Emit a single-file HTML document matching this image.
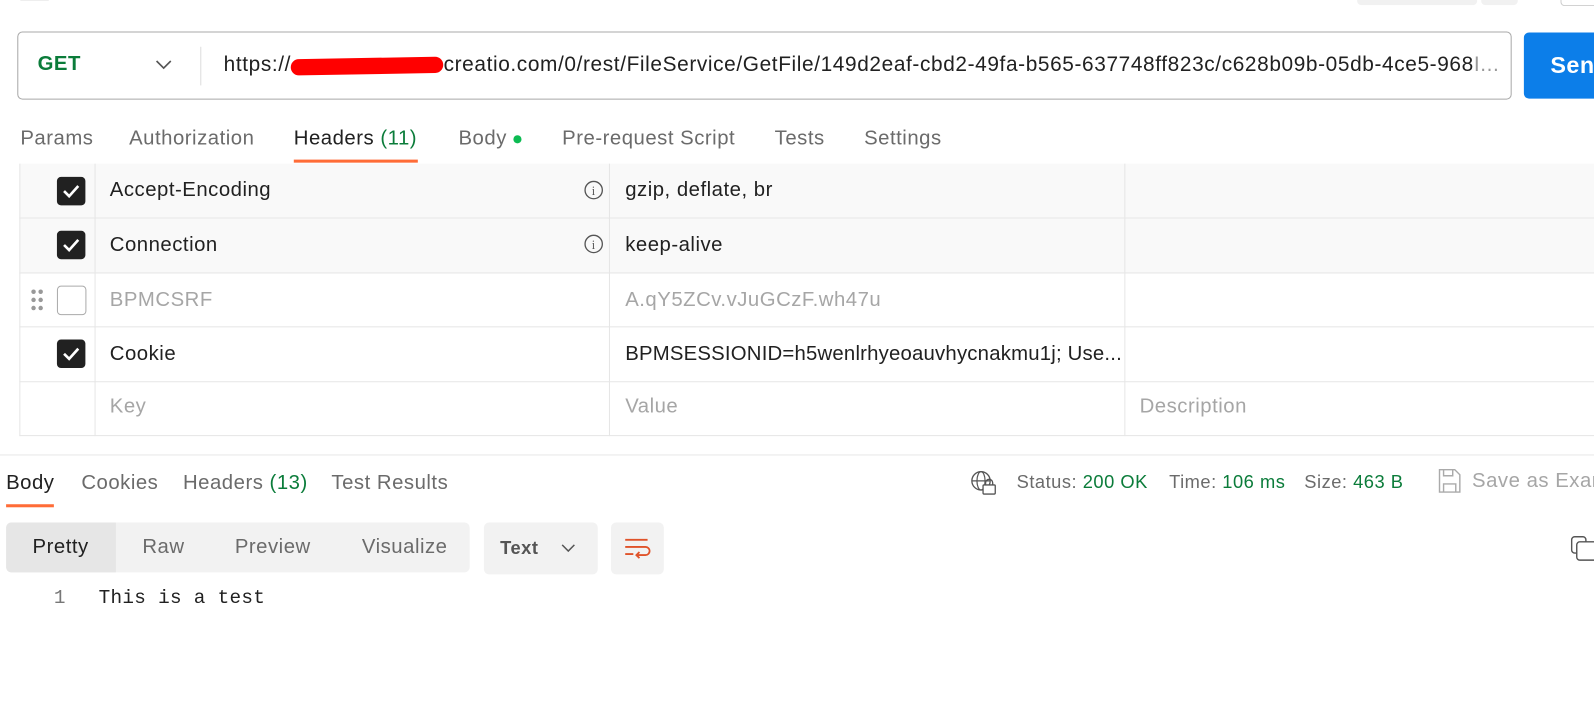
<!DOCTYPE html>
<html><head><style>
body{margin:0;width:1594px;height:722px;background:#fff;font-family:"Liberation Sans",sans-serif;overflow:hidden;color:#212121}
#w{position:absolute;left:0;top:0;width:1570px;height:712px;transform:scale(1.0166);transform-origin:0 0}
.a{position:absolute;white-space:nowrap;letter-spacing:.5px}
.cb{position:absolute;left:56px;width:28px;height:28px;border-radius:4px;background:#212121}
.cb svg{position:absolute;left:5px;top:6px}
.row{position:absolute;left:19px;width:1580px;border-bottom:1px solid #e6e6e6}
.vl{position:absolute;width:1px;background:#e6e6e6}
.t{font-size:20px;color:#6b6b6b}
.f{font-size:20px}
</style></head><body><div id="w">
<div class="a" style="left:20px;top:0;width:28px;height:1px;background:#eee"></div>
<div class="a" style="left:1335px;top:0;width:118px;height:5px;background:#f1f1f1;border-radius:0 0 4px 4px"></div>
<div class="a" style="left:1457px;top:0;width:36px;height:5px;background:#f1f1f1;border-radius:0 0 4px 4px"></div>
<div class="a" style="left:1535px;top:0;width:60px;height:5px;border:1px solid #ccc;border-top:none;border-radius:0 0 4px 4px"></div>

<div class="a" style="left:17px;top:31px;width:1468px;height:65px;border:1px solid #a8a8a8;border-radius:5px"></div>
<div class="a" style="left:37px;top:52px;font-size:20px;font-weight:bold;color:#0b7c3a">GET</div>
<svg class="a" style="left:152px;top:57px" width="18" height="12"><path d="M2 3l7 7 7-7" stroke="#555" stroke-width="1.6" fill="none"/></svg>
<div class="a" style="left:197px;top:46px;width:1px;height:38px;background:#ddd"></div>
<div class="a" style="left:220px;top:52px;font-size:20.5px;color:#212121;letter-spacing:.6px">https://<span style="display:inline-block;width:150px;height:16px;background:#f00;border-radius:8px;vertical-align:middle;transform:rotate(-1deg)"></span>creatio.com/0/rest/FileService/GetFile/149d2eaf-cbd2-49fa-b565-637748ff823c/c628b09b-05db-4ce5-968<span style="color:#999">I...</span></div>
<div class="a" style="left:1499px;top:32px;width:110px;height:65px;background:#0c7ee9;border-radius:5px"></div>
<div class="a" style="left:1525px;top:51px;font-size:23px;font-weight:bold;color:#fff">Send</div>

<div class="a t" style="left:20px;top:125px">Params</div>
<div class="a t" style="left:127px;top:125px">Authorization</div>
<div class="a t" style="left:289px;top:125px;color:#212121">Headers <span style="color:#0b7c3a">(11)</span></div>
<div class="a" style="left:289px;top:157px;width:122px;height:3px;background:#ff6c37"></div>
<div class="a t" style="left:451px;top:125px">Body <span style="display:inline-block;width:8px;height:8px;border-radius:50%;background:#0cbb52;vertical-align:middle"></span></div>
<div class="a t" style="left:553px;top:125px">Pre-request Script</div>
<div class="a t" style="left:762px;top:125px">Tests</div>
<div class="a t" style="left:850px;top:125px">Settings</div>
<div class="a" style="left:1585px;top:128px;width:6px;height:14px;border-radius:6px;background:#c33"></div>

<div class="row" style="top:161px;height:53px;background:#f9f9f9"></div>
<div class="row" style="top:215px;height:53px;background:#f9f9f9"></div>
<div class="row" style="top:269px;height:52px"></div>
<div class="row" style="top:322px;height:53px"></div>
<div class="row" style="top:376px;height:52px"></div>
<div class="vl" style="left:19px;top:161px;height:268px"></div>
<div class="vl" style="left:93px;top:161px;height:268px"></div>
<div class="vl" style="left:599px;top:161px;height:268px"></div>
<div class="vl" style="left:1106px;top:161px;height:268px"></div>

<div class="cb" style="top:174px"><svg width="18" height="16"><path d="M2 8l5 5 9-10" stroke="#fff" stroke-width="2.6" fill="none"/></svg></div>
<div class="cb" style="top:227px"><svg width="18" height="16"><path d="M2 8l5 5 9-10" stroke="#fff" stroke-width="2.6" fill="none"/></svg></div>
<div class="cb" style="top:281px;background:#fff;border:1px solid #aaa;width:27px;height:27px"></div>
<svg class="a" style="left:29px;top:283px" width="16" height="24"><g fill="#999"><circle cx="4" cy="4" r="2.2"/><circle cx="11" cy="4" r="2.2"/><circle cx="4" cy="12" r="2.2"/><circle cx="11" cy="12" r="2.2"/><circle cx="4" cy="20" r="2.2"/><circle cx="11" cy="20" r="2.2"/></g></svg>
<div class="cb" style="top:334px"><svg width="18" height="16"><path d="M2 8l5 5 9-10" stroke="#fff" stroke-width="2.6" fill="none"/></svg></div>

<div class="a f" style="left:108px;top:176px">Accept-Encoding</div>
<div class="a f" style="left:108px;top:230px">Connection</div>
<div class="a f" style="left:108px;top:284px;color:#a6a6a6">BPMCSRF</div>
<div class="a f" style="left:108px;top:337px">Cookie</div>
<div class="a f" style="left:108px;top:389px;color:#a6a6a6">Key</div>
<svg class="a" style="left:574px;top:177px" width="20" height="20"><circle cx="10" cy="10" r="8.5" stroke="#555" stroke-width="1.3" fill="none"/><text x="10" y="15" font-size="12" text-anchor="middle" fill="#555" font-family="Liberation Serif">i</text></svg>
<svg class="a" style="left:574px;top:230px" width="20" height="20"><circle cx="10" cy="10" r="8.5" stroke="#555" stroke-width="1.3" fill="none"/><text x="10" y="15" font-size="12" text-anchor="middle" fill="#555" font-family="Liberation Serif">i</text></svg>
<div class="a f" style="left:615px;top:176px">gzip, deflate, br</div>
<div class="a f" style="left:615px;top:230px">keep-alive</div>
<div class="a f" style="left:615px;top:284px;color:#a6a6a6">A.qY5ZCv.vJuGCzF.wh47u</div>
<div class="a f" style="left:615px;top:337px;letter-spacing:.2px">BPMSESSIONID=h5wenlrhyeoauvhycnakmu1j; Use...</div>
<div class="a f" style="left:615px;top:389px;color:#a6a6a6">Value</div>
<div class="a f" style="left:1121px;top:389px;color:#a6a6a6">Description</div>

<div class="a" style="left:0;top:447px;width:1594px;height:1px;background:#e8e8e8"></div>
<div class="a t" style="left:6px;top:464px;color:#212121">Body</div>
<div class="a" style="left:6px;top:496px;width:47px;height:3px;background:#ff6c37"></div>
<div class="a t" style="left:80px;top:464px">Cookies</div>
<div class="a t" style="left:180px;top:464px">Headers <span style="color:#0b7c3a">(13)</span></div>
<div class="a t" style="left:326px;top:464px">Test Results</div>

<svg class="a" style="left:954px;top:462px" width="28" height="26"><circle cx="11" cy="11" r="9" stroke="#555" stroke-width="1.3" fill="none"/><ellipse cx="11" cy="11" rx="4" ry="9" stroke="#555" stroke-width="1.2" fill="none"/><path d="M2 11h18" stroke="#555" stroke-width="1.2"/><rect x="13" y="15" width="12" height="9" rx="1" fill="#fff" stroke="#555" stroke-width="1.3"/><path d="M15.5 15v-2a3.5 3.5 0 017 0v2" stroke="#555" stroke-width="1.3" fill="none"/></svg>
<div class="a" style="left:1000px;top:464px;font-size:18px;color:#6b6b6b">Status: <span style="color:#0b7c3a">200 OK</span></div>
<div class="a" style="left:1150px;top:464px;font-size:18px;color:#6b6b6b">Time: <span style="color:#0b7c3a">106 ms</span></div>
<div class="a" style="left:1283px;top:464px;font-size:18px;color:#6b6b6b">Size: <span style="color:#0b7c3a">463 B</span></div>
<svg class="a" style="left:1414px;top:460px" width="24" height="26"><path d="M2 2h15l5 5v17H2z" stroke="#aaa" stroke-width="1.4" fill="none"/><path d="M6 2v6h9V2M6 24v-8h12v8" stroke="#aaa" stroke-width="1.4" fill="none"/></svg>
<div class="a" style="left:1448px;top:462px;font-size:20px;color:#a6a6a6">Save as Example</div>

<div class="a" style="left:6px;top:514px;width:456px;height:49px;background:#f2f2f2;border-radius:5px"></div>
<div class="a" style="left:6px;top:514px;width:108px;height:49px;background:#e6e6e6;border-radius:5px 0 0 5px"></div>
<div class="a f" style="left:32px;top:527px">Pretty</div>
<div class="a t" style="left:140px;top:527px">Raw</div>
<div class="a t" style="left:231px;top:527px">Preview</div>
<div class="a t" style="left:356px;top:527px">Visualize</div>
<div class="a" style="left:476px;top:514px;width:112px;height:51px;background:#f2f2f2;border-radius:5px"></div>
<div class="a" style="left:492px;top:529px;font-size:18px;font-weight:bold;color:#555">Text</div>
<svg class="a" style="left:550px;top:533px" width="18" height="12"><path d="M3 3l6 6 6-6" stroke="#555" stroke-width="1.5" fill="none"/></svg>
<div class="a" style="left:601px;top:514px;width:52px;height:51px;background:#f2f2f2;border-radius:5px"></div>
<svg class="a" style="left:613px;top:527px" width="28" height="26"><path d="M2 4h22M2 11h20a4 4 0 010 8h-8M2 18h8" stroke="#e0532a" stroke-width="1.8" fill="none"/><path d="M16 16l-3 3 3 3" stroke="#e0532a" stroke-width="1.8" fill="none"/></svg>
<svg class="a" style="left:1545px;top:527px" width="30" height="26"><rect x="1" y="1" width="14" height="16" rx="3" stroke="#555" stroke-width="1.4" fill="none"/><rect x="6" y="6" width="20" height="18" rx="3" stroke="#555" stroke-width="1.4" fill="#fff"/></svg>

<div class="a" style="left:53px;top:577px;font-family:'Liberation Mono',monospace;font-size:19px;color:#777;letter-spacing:0">1</div>
<div class="a" style="left:97px;top:577px;font-family:'Liberation Mono',monospace;font-size:19px;color:#212121;letter-spacing:.3px">This is a test</div>
</div></body></html>
